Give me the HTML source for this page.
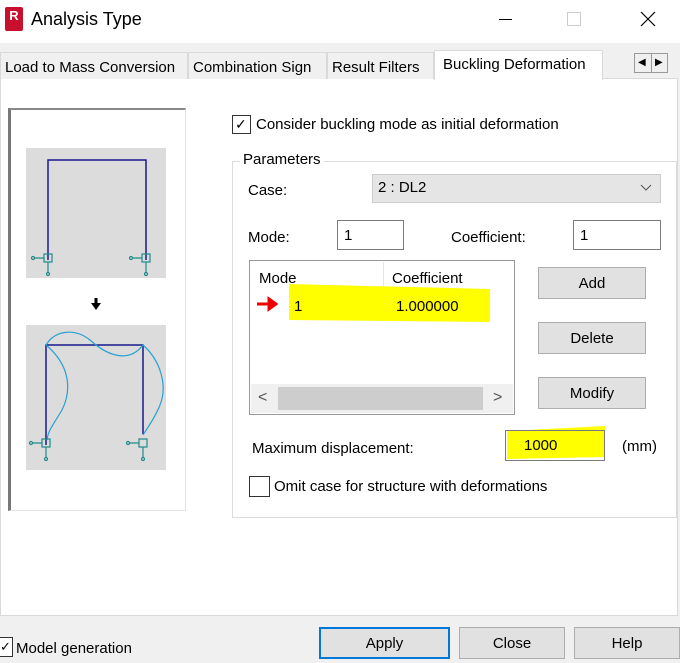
<!DOCTYPE html>
<html><head><meta charset="utf-8"><style>
*{box-sizing:border-box;margin:0;padding:0}
body{width:680px;height:663px;position:relative;overflow:hidden;background:#f0f0f0;font-family:"Liberation Sans",sans-serif;font-size:15px;color:#000}
.a{position:absolute}
.t{position:absolute;white-space:nowrap;line-height:18px}
.tab{position:absolute;top:52px;height:27px;background:#f0f0f0;border:1px solid #d9d9d9;border-bottom:none;padding:6px 4px 0;white-space:nowrap;font-size:15px}
.btn{position:absolute;background:#e1e1e1;border:1px solid #adadad;text-align:center;line-height:31px}
.inp{position:absolute;background:#fff;border:1px solid #7a7a7a;padding:6px 6px;line-height:18px}
.cb{position:absolute;width:19px;height:19px;border:1px solid #333;background:#fff}
</style></head><body>
<div class="a" style="left:0;top:0;width:680px;height:43px;background:#fff"></div>
<div class="a" style="left:5px;top:7px;width:18px;height:24px;background:#c8102e;border-radius:2px;color:#fff;font-weight:bold;font-size:13px;text-align:center;line-height:17px">R</div>
<div class="t" style="left:31px;top:10px;font-size:18px">Analysis Type</div>
<div class="a" style="left:499px;top:19px;width:13px;height:1px;background:#000"></div>
<div class="a" style="left:567px;top:12px;width:14px;height:14px;border:1px solid #ccc"></div>
<svg class="a" style="left:640px;top:11px" width="16" height="16"><path d="M1 1L15 15M15 1L1 15" stroke="#000" stroke-width="1.2"/></svg>

<div class="a" style="left:0;top:78px;width:678px;height:538px;background:#fff;border:1px solid #d9d9d9"></div>
<div class="tab" style="left:0;width:188px">Load to Mass Conversion</div>
<div class="tab" style="left:188px;width:139px">Combination Sign</div>
<div class="tab" style="left:327px;width:107px">Result Filters</div>
<div class="tab" style="left:434px;top:50px;height:30px;width:169px;background:#fff;padding-top:5px;padding-left:8px">Buckling Deformation</div>
<div class="a" style="left:634px;top:53px;width:34px;height:20px;border:1px solid #999;background:#f0f0f0"></div>
<div class="a" style="left:651px;top:53px;width:1px;height:20px;background:#999"></div>
<div class="t" style="left:638px;top:54px;font-size:10px">◀</div>
<div class="t" style="left:655px;top:54px;font-size:10px">▶</div>

<!-- left picture -->
<div class="a" style="left:8px;top:108px;width:178px;height:403px;border:1px solid #e3e3e3;border-left:3px solid #777;border-top:2px solid #888"></div>
<svg class="a" style="left:0;top:100px" width="200" height="420">
<rect x="26" y="48" width="140" height="130" fill="#dcdcdc"/>
<path d="M48 160V60H146V160" stroke="#1a1a8c" stroke-width="1.5" fill="none"/>
<g stroke="#1f8a8a" fill="none" stroke-width="1.2">
<rect x="44" y="154" width="8" height="8"/><path d="M34 158H44M48 162V173"/><circle cx="33" cy="158" r="1.5"/><circle cx="48" cy="174" r="1.5"/>
<rect x="142" y="154" width="8" height="8"/><path d="M132 158H142M146 162V173"/><circle cx="131" cy="158" r="1.5"/><circle cx="146" cy="174" r="1.5"/>
</g>
<path d="M96 198v5" stroke="#000" stroke-width="3"/><path d="M91 203h10l-5 7z" fill="#000"/>
<rect x="26" y="225" width="140" height="145" fill="#dcdcdc"/>
<path d="M46 345V245H143V334" stroke="#1a1a8c" stroke-width="1.5" fill="none"/>
<path d="M46 245C55 230 75 228 90 240C110 258 130 262 143 245C160 260 168 285 160 305C155 318 146 330 143 335M46 245C70 265 72 290 62 310C55 322 48 330 47 340" stroke="#2aa0d0" stroke-width="1.2" fill="none"/>
<g stroke="#1f8a8a" fill="none" stroke-width="1.2">
<rect x="42" y="339" width="8" height="8"/><path d="M32 343H42M46 347V358"/><circle cx="31" cy="343" r="1.5"/><circle cx="46" cy="359" r="1.5"/>
<rect x="139" y="339" width="8" height="8"/><path d="M129 343H139M143 347V358"/><circle cx="128" cy="343" r="1.5"/><circle cx="143" cy="359" r="1.5"/>
</g>
</svg>

<!-- right -->
<div class="cb" style="left:232px;top:115px"></div><div class="t" style="left:235px;top:115px;font-size:14px">✓</div>
<div class="t" style="left:256px;top:116px">Consider buckling mode as initial deformation</div>
<div class="a" style="left:232px;top:161px;width:445px;height:357px;border:1px solid #dcdcdc"></div>
<div class="t" style="left:240px;top:151px;background:#fff;padding:0 3px">Parameters</div>
<div class="t" style="left:248px;top:182px">Case:</div>
<div class="a" style="left:372px;top:174px;width:289px;height:29px;background:#e5e5e5;border:1px solid #ccc"></div>
<div class="t" style="left:378px;top:179px">2 : DL2</div>
<svg class="a" style="left:640px;top:184px" width="12" height="8"><path d="M1 1l5 5 5-5" stroke="#555" fill="none"/></svg>
<div class="t" style="left:248px;top:229px">Mode:</div>
<div class="inp" style="left:337px;top:220px;width:67px;height:30px">1</div>
<div class="t" style="left:451px;top:229px">Coefficient:</div>
<div class="inp" style="left:573px;top:220px;width:88px;height:30px">1</div>

<div class="a" style="left:249px;top:260px;width:266px;height:155px;border:1px solid #999;background:#fff"></div>
<div class="a" style="left:383px;top:262px;width:1px;height:28px;background:#e5e5e5"></div>
<div class="t" style="left:259px;top:270px">Mode</div>
<div class="t" style="left:392px;top:270px">Coefficient</div>
<svg class="a" style="left:280px;top:284px" width="212" height="40"><polygon points="9,0 210,5 210,38 9,36" fill="#ffff00"/></svg>
<svg class="a" style="left:256px;top:296px" width="22" height="16"><path d="M1 8h12M13 3l7 5-7 5z" stroke="#e00" stroke-width="3" fill="#e00"/></svg>
<div class="t" style="left:294px;top:298px">1</div>
<div class="t" style="left:396px;top:298px">1.000000</div>
<div class="a" style="left:251px;top:384px;width:262px;height:29px;background:#f0f0f0"></div>
<div class="a" style="left:278px;top:387px;width:205px;height:23px;background:#cdcdcd"></div>
<div class="t" style="left:258px;top:389px;font-size:16px;color:#555">&lt;</div>
<div class="t" style="left:493px;top:389px;font-size:16px;color:#555">&gt;</div>

<div class="btn" style="left:538px;top:267px;width:108px;height:32px">Add</div>
<div class="btn" style="left:538px;top:322px;width:108px;height:32px">Delete</div>
<div class="btn" style="left:538px;top:377px;width:108px;height:32px">Modify</div>

<div class="t" style="left:252px;top:440px">Maximum displacement:</div>
<svg class="a" style="left:505px;top:425px" width="102" height="36"><polygon points="2,6 100,1 100,32 2,34" fill="#ffff00"/></svg>
<div class="a" style="left:505px;top:430px;width:100px;height:31px;border:1px solid #7a7a7a"></div>
<div class="t" style="left:524px;top:437px">1000</div>
<div class="t" style="left:622px;top:438px">(mm)</div>
<div class="cb" style="left:249px;top:476px;width:21px;height:21px"></div>
<div class="t" style="left:274px;top:478px">Omit case for structure with deformations</div>

<!-- bottom -->
<div class="cb" style="left:-2px;top:637px;width:15px;height:20px"></div><div class="t" style="left:0;top:638px;font-size:13px">✓</div>
<div class="t" style="left:16px;top:640px">Model generation</div>
<div class="btn" style="left:319px;top:627px;width:131px;height:32px;border:2px solid #0078d7;line-height:30px">Apply</div>
<div class="btn" style="left:459px;top:627px;width:106px;height:32px">Close</div>
<div class="btn" style="left:574px;top:627px;width:106px;height:32px">Help</div>
</body></html>
